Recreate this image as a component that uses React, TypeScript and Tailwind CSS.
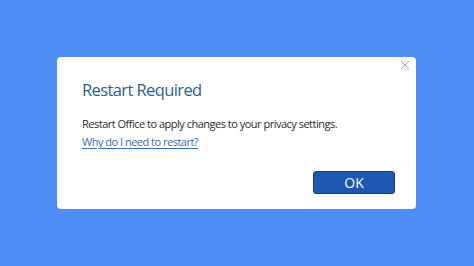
import React from 'react';

export default function App() {
  return (
    <div className="w-[474px] h-[266px] bg-[#4f8ef5] pt-[57px] pl-[57px]" style={{ fontFamily: '"Open Sans", "Noto Sans", sans-serif' }}>
      <div className="relative w-[359px] h-[152px] bg-white rounded-[4px] pl-[25px] pt-[22px] pr-[21px]">
        {/* close */}
        <button className="absolute right-[4px] top-[1px] w-[14px] h-[14px] flex items-center justify-center text-[#a9a9a9]">
          <svg width="10" height="10" viewBox="0 0 10 10" fill="none" stroke="currentColor" strokeWidth="1">
            <path d="M1 1l8 8M9 1l-8 8" />
          </svg>
        </button>
        <h1 className="text-[16.5px] leading-[22px] tracking-[-0.6px] text-[#2e5d8c] font-normal whitespace-nowrap">Restart Required</h1>
        <p className="mt-[15px] text-[11px] leading-[16px] tracking-[-0.5px] text-[#2b2b2b] whitespace-nowrap">
          Restart Office to apply changes to your privacy settings.
        </p>
        <a href="#" className="block mt-[2px] text-[11px] leading-[16px] tracking-[-0.5px] text-[#3b6ea8] underline underline-offset-2 whitespace-nowrap">
          Why do I need to restart?
        </a>
        <div className="flex justify-end mt-[21px]">
          <button className="w-[82px] h-[23px] bg-[#1d58b3] border border-[#1a3c73] rounded-[3px] text-white text-[14px] font-medium leading-none">
            OK
          </button>
        </div>
      </div>
    </div>
  );
}
